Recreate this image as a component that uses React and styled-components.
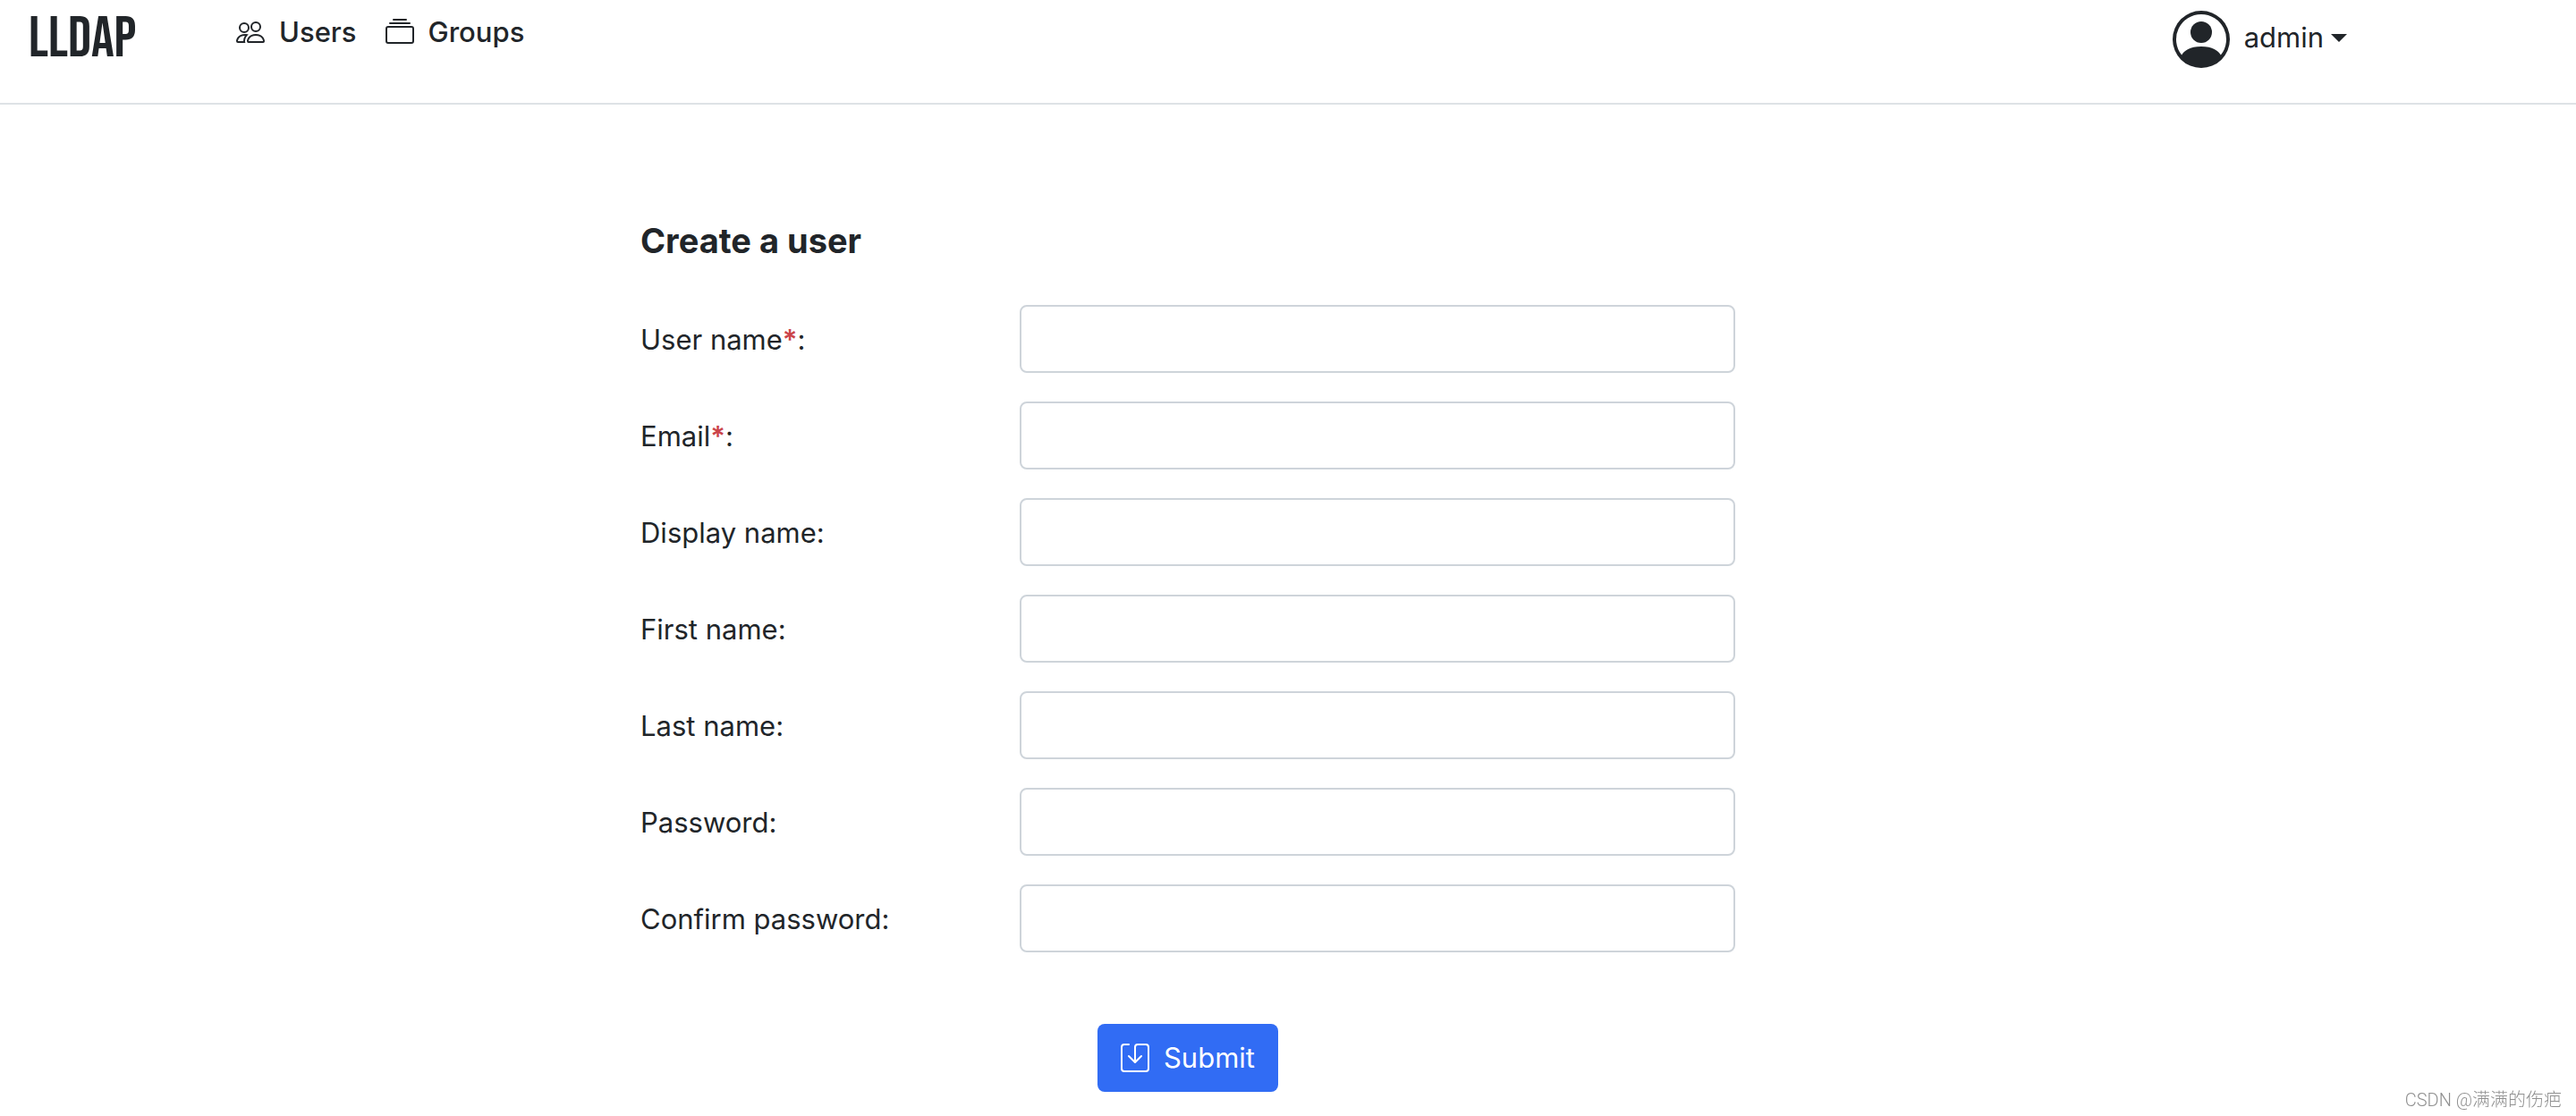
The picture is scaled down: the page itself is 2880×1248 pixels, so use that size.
import React, { useState } from 'react';
import styled, { createGlobalStyle } from 'styled-components';
import { BsPeople, BsCollection, BsPersonCircle, BsSave } from 'react-icons/bs';

const fields = [
  { id: 'username', label: 'User name', type: 'text', required: true },
  { id: 'email', label: 'Email', type: 'email', required: true },
  { id: 'display-name', label: 'Display name', type: 'text' },
  { id: 'first-name', label: 'First name', type: 'text' },
  { id: 'last-name', label: 'Last name', type: 'text' },
  { id: 'password', label: 'Password', type: 'password' },
  { id: 'confirm-password', label: 'Confirm password', type: 'password' },
];

const App = () => {
  const [values, setValues] = useState({});

  const handleChange = (event) => {
    const { name, value } = event.target;
    setValues((prevValues) => ({ ...prevValues, [name]: value }));
  };

  const handleSubmit = (event) => {
    event.preventDefault();
  };

  const renderFields = () => {
    return fields.map((field) => (
      <FormRow key={field.id}>
        <Label htmlFor={field.id}>
          {field.label}
          {field.required && <Required>*</Required>}:
        </Label>
        <InputColumn>
          <Input
            id={field.id}
            name={field.id}
            type={field.type}
            value={values[field.id] || ''}
            onChange={handleChange}
          />
        </InputColumn>
      </FormRow>
    ));
  };

  return (
    <>
      <GlobalStyle />
      <Header>
        <Brand href="#">LLDAP</Brand>
        <Nav>
          <NavLink href="#users">
            <BsPeople size={32} />
            Users
          </NavLink>
          <NavLink href="#groups">
            <BsCollection size={32} />
            Groups
          </NavLink>
        </Nav>
        <UserMenu type="button">
          <BsPersonCircle size={64} />
          <UserName>
            admin
            <Caret />
          </UserName>
        </UserMenu>
      </Header>
      <Main>
        <Form onSubmit={handleSubmit} noValidate>
          <Title>Create a user</Title>
          {renderFields()}
          <Actions>
            <SubmitButton type="submit">
              <BsSave size={32} />
              Submit
            </SubmitButton>
          </Actions>
        </Form>
      </Main>
      <Watermark>CSDN @满满的伤疤</Watermark>
    </>
  );
};

const GlobalStyle = createGlobalStyle`
  * {
    box-sizing: border-box;
  }

  body {
    margin: 0;
    background-color: #ffffff;
    color: #212529;
    font-family: Inter, "Liberation Sans", sans-serif;
    font-size: 31px;
    line-height: 48px;
  }
`;

const Header = styled.header`
  display: flex;
  align-items: flex-start;
  padding: 12px 256px 39px 32px;
  border-bottom: 2px solid #dee2e6;
`;

const Brand = styled.a`
  width: 232px;
  color: inherit;
  font-family: "Bebas Neue", "Roboto Condensed", "Liberation Sans Narrow", sans-serif;
  font-size: 64px;
  font-weight: 500;
  line-height: 64px;
  text-decoration: none;
`;

const Nav = styled.nav`
  display: flex;
  flex: 1;
  gap: 32px;
`;

const NavLink = styled.a`
  display: flex;
  align-items: center;
  gap: 16px;
  color: inherit;
  font-weight: 500;
  text-decoration: none;
`;

const UserMenu = styled.button`
  display: flex;
  align-items: center;
  gap: 16px;
  padding: 0;
  border: none;
  background: none;
  color: inherit;
  font: inherit;
  cursor: pointer;
`;

const UserName = styled.span`
  display: flex;
  align-items: center;
  gap: 8px;
  padding-bottom: 4px;
`;

const Caret = styled.span`
  border-top: 9px solid;
  border-right: 9px solid transparent;
  border-left: 9px solid transparent;
`;

const Main = styled.main`
  max-width: 1496px;
  margin: 0 auto;
  padding: 128px 0 24px;
`;

const Form = styled.form`
  max-width: 1272px;
`;

const Title = styled.h5`
  margin: 0 0 48px;
  padding: 0 24px;
  font-size: 38px;
  font-weight: 700;
  line-height: 48px;
`;

const FormRow = styled.div`
  display: grid;
  grid-template-columns: 1fr 2fr;
  align-items: center;
  margin-bottom: 32px;
`;

const Label = styled.label`
  padding: 2px 24px 0;
`;

const Required = styled.span`
  color: #cb444a;
  font-weight: 600;
`;

const InputColumn = styled.div`
  padding: 0 24px;
`;

const Input = styled.input`
  display: block;
  width: 100%;
  height: 76px;
  padding: 12px 24px;
  border: 2px solid #ced4da;
  border-radius: 8px;
  background-color: #ffffff;
  color: inherit;
  font: inherit;
`;

const Actions = styled.div`
  display: flex;
  justify-content: center;
  padding-top: 48px;
`;

const SubmitButton = styled.button`
  display: flex;
  align-items: center;
  gap: 16px;
  height: 76px;
  padding: 0 26px;
  border: none;
  border-radius: 8px;
  background-color: #316cf4;
  color: #ffffff;
  font: inherit;
  cursor: pointer;
`;

const Watermark = styled.div`
  position: fixed;
  right: 16px;
  bottom: 6px;
  color: #909090;
  font-family: Roboto, "Noto Sans CJK SC", sans-serif;
  font-size: 20px;
  font-weight: 300;
  line-height: 24px;
`;

export default App;
